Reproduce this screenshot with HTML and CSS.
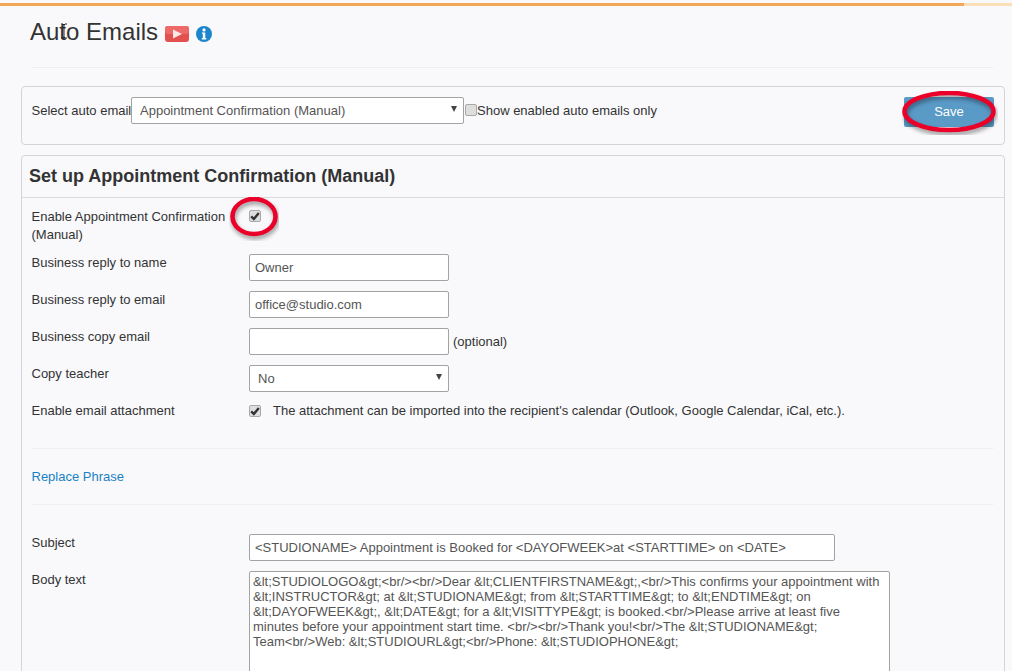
FILE: index.html
```html
<!DOCTYPE html>
<html lang="en">
<head>
<meta charset="utf-8">
<title>Auto Emails</title>
<link rel="stylesheet" href="styles.css">
</head>
<body>
<div class="topbar"><div class="topbar-fill"></div></div>
<main class="page">
  <header class="title-row">
    <h1>Auto Emails</h1>
    <svg class="yt" viewBox="0 0 24 16" width="24" height="16"><rect x="0" y="0" width="24" height="16" rx="3" fill="#e2504f"/><rect x="0" y="0" width="24" height="8" rx="3" fill="#ee6a68"/><path d="M8 3.5 L17 8 L8 12.5 Z" fill="#fbe9e6"/></svg>
    <svg class="info" viewBox="0 0 16 16" width="16" height="16"><circle cx="8" cy="8" r="8" fill="#1b86cc"/><circle cx="8" cy="3.9" r="1.6" fill="#fff"/><path d="M5.9 6.4h3.4v5.6h1v1.4H5.8V12h1V7.8h-.9z" fill="#fff"/></svg>
  </header>
  <hr class="rule title-rule">

  <section class="panel select-panel">
    <label class="plain select-label">Select auto email</label>
    <div class="select-wrap wide">
      <select><option>Appointment Confirmation (Manual)</option></select>
      <i class="arrow"></i>
    </div>
    <span class="box"></span>
    <span class="plain">Show enabled auto emails only</span>
    <button class="save">Save</button>
  </section>

  <section class="panel setup">
    <h2>Set up Appointment Confirmation (Manual)</h2>
    <div class="setup-body">
      <div class="form-row first">
        <label>Enable Appointment Confirmation (Manual)</label>
        <span class="box on"><svg viewBox="0 0 12 12" width="12" height="12"><path d="M2.2 6.4 L4.8 9 L9.8 3" fill="none" stroke="#333" stroke-width="2.4"/></svg></span>
      </div>
      <div class="form-row"><label>Business reply to name</label><input class="field" value="Owner"></div>
      <div class="form-row"><label>Business reply to email</label><input class="field" value="office@studio.com"></div>
      <div class="form-row"><label>Business copy email</label><input class="field" value=""><span class="note">(optional)</span></div>
      <div class="form-row"><label>Copy teacher</label>
        <div class="select-wrap narrow"><select><option>No</option></select><i class="arrow"></i></div>
      </div>
      <div class="form-row attach">
        <label>Enable email attachment</label>
        <span class="box on"><svg viewBox="0 0 12 12" width="12" height="12"><path d="M2.2 6.4 L4.8 9 L9.8 3" fill="none" stroke="#333" stroke-width="2.4"/></svg></span>
        <span class="attach-text">The attachment can be imported into the recipient's calendar (Outlook, Google Calendar, iCal, etc.).</span>
      </div>
      <hr class="rule">
      <a class="replace" href="#">Replace Phrase</a>
      <hr class="rule">
      <div class="form-row subject"><label>Subject</label><input class="field long" value="&lt;STUDIONAME&gt; Appointment is Booked for &lt;DAYOFWEEK&gt;at &lt;STARTTIME&gt; on &lt;DATE&gt;"></div>
      <div class="form-row body-row"><label>Body text</label><textarea>&amp;lt;STUDIOLOGO&amp;gt;&lt;br/&gt;&lt;br/&gt;Dear &amp;lt;CLIENTFIRSTNAME&amp;gt;,&lt;br/&gt;This confirms your appointment with &amp;lt;INSTRUCTOR&amp;gt; at &amp;lt;STUDIONAME&amp;gt; from &amp;lt;STARTTIME&amp;gt; to &amp;lt;ENDTIME&amp;gt; on &amp;lt;DAYOFWEEK&amp;gt;, &amp;lt;DATE&amp;gt; for a &amp;lt;VISITTYPE&amp;gt; is booked.&lt;br/&gt;Please arrive at least five minutes before your appointment start time. &lt;br/&gt;&lt;br/&gt;Thank you!&lt;br/&gt;The &amp;lt;STUDIONAME&amp;gt; Team&lt;br/&gt;Web: &amp;lt;STUDIOURL&amp;gt;&lt;br/&gt;Phone: &amp;lt;STUDIOPHONE&amp;gt;</textarea></div>
    </div>
  </section>
</main>

<svg class="overlay ring-save" viewBox="0 0 96 44" width="96" height="44"><ellipse cx="47" cy="20.5" rx="44.5" ry="18.5" class="ring"/></svg>
<svg class="overlay ring-check" viewBox="0 0 50 44" width="50" height="44"><ellipse cx="25" cy="19.5" rx="21.5" ry="17.5" class="ring"/></svg>
<svg class="overlay cursor" viewBox="0 0 8 16" width="8" height="16"><path d="M1 1h2l1 1 1-1h2M4 2v12M1 15h2l1-1 1 1h2" fill="none" stroke="#222" stroke-width="1"/></svg>
</body>
</html>
```
FILE: styles.css
```css
* { box-sizing: border-box; }
html, body { margin: 0; height: 671px; overflow: hidden; }
body {
  position: relative;
  background: #f9f9fb;
  color: #333;
  font-family: "Liberation Sans", Arial, sans-serif;
  font-size: 13px;
  line-height: 18px;
  padding-top: 3px;
}
.topbar { height: 3px; background: #fbdfb8; }
.topbar-fill { height: 3px; width: 964px; background: #f4a659; }
.page { padding: 0 7px 0 21px; }

.title-row { display: flex; align-items: center; padding: 5px 0 0 9px; height: 46px; }
h1 { margin: 0; font-size: 24px; font-weight: 400; line-height: 30px; }
.yt { margin-left: 7px; margin-top: 4px; }
.info { margin-left: 7px; margin-top: 4px; }

.rule { border: 0; border-top: 1px solid #eeeef0; margin: 0 11px; }
.title-rule { margin: 15px 12px 18px 11px; }

.panel { border: 1px solid #d4d4d6; border-radius: 4px; }
.select-panel { display: flex; align-items: flex-start; height: 59px; padding: 10px 10px 0 9.5px; margin-bottom: 10px; }
.select-label { width: 99.5px; flex: none; }
.plain { line-height: 27px; white-space: nowrap; }
.select-wrap { position: relative; height: 27px; }
.wide { width: 333px; }
.narrow { width: 200px; }
select, .field, textarea {
  border: 1px solid #a3a3a3;
  border-radius: 2px;
  background: #fff;
  color: #555;
  font: inherit;
}
select { appearance: none; width: 100%; height: 27px; padding: 0 8px; outline: 0; }
.arrow {
  position: absolute; right: 7px; top: 9px;
  border-left: 3px solid transparent; border-right: 3px solid transparent;
  border-top: 6px solid #444;
}
.box {
  display: flex; align-items: center; justify-content: center;
  flex: none;
  width: 12px; height: 12px;
  background: #dedede;
  border: 1px solid #a9a9a9;
  border-radius: 2px;
}
.box svg { flex: none; }
.select-panel .box { margin-top: 7px; margin-left: 1px; }
.save {
  margin-left: auto;
  width: 90px; height: 30px;
  background: #5a9ac7;
  color: #fff;
  border: 0;
  border-radius: 2px;
  font: inherit;
}

.setup { height: 600px; }
h2 { margin: 0; height: 42px; padding-left: 7px; font-size: 18px; line-height: 41px; font-weight: 700; color: #333; border-bottom: 1px solid #dcdcde; }
.setup-body { padding: 0 11px 0 9.5px; }
.form-row { display: flex; align-items: flex-start; min-height: 27px; margin-top: 10px; }
.form-row label { width: 217.5px; flex: none; }
.form-row.first { height: 36px; }
.form-row.first .box { margin-top: 2px; }
.field { width: 200px; height: 27px; padding: 0 5px; outline: 0; }
.note { margin-left: 4px; line-height: 27px; }
.attach .box { margin-top: 3px; }
.attach-text { margin-left: 12px; white-space: nowrap; }
.attach + .rule { margin: 19px 0 0; }
.replace { display: block; margin: 19px 0 18px; color: #1a81c4; text-decoration: none; }
.replace + .rule { margin: 0; }
.subject { margin-top: 29px; }
.long { width: 586px; }
textarea { width: 641px; height: 160px; padding: 2px 3px; line-height: 15px; resize: none; overflow: hidden; outline: 0; display: block; }

.overlay { position: absolute; pointer-events: none; }
.ring { fill: none; stroke: #ea0029; stroke-width: 4.5; filter: drop-shadow(1px 3px 2px rgba(0,0,0,.4)); }
.ring-save { left: 901.5px; top: 91px; }
.ring-check { left: 229px; top: 197px; }
.cursor { left: 60px; top: 23px; }
```
